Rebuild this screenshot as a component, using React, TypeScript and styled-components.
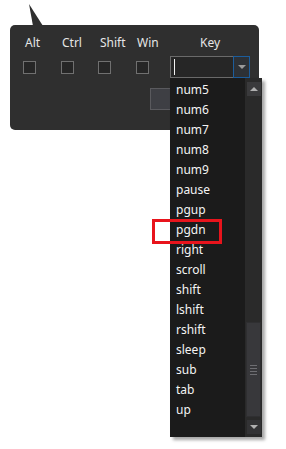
import React from "react";
import styled, { createGlobalStyle } from "styled-components";

const Global = createGlobalStyle`
  html, body { margin: 0; padding: 0; background: #ffffff; }
  body { font-family: "Noto Sans", "Open Sans", sans-serif; }
`;

const Page = styled.div`
  position: relative;
  width: 286px;
  height: 449px;
  padding: 25px 0 0 10px;
  box-sizing: border-box;
`;

const Tail = styled.svg`
  position: absolute;
  left: 26px;
  top: 4px;
`;

const Panel = styled.div`
  width: 249px;
  height: 105px;
  background: #2f2f2f;
  border-radius: 5px;
  padding: 10px 0 0 13px;
  box-sizing: border-box;
  display: flex;
  flex-direction: column;
`;

const Grid = styled.div`
  display: grid;
  grid-template-columns: 38px 37px 38px 34px 80px;
  grid-template-rows: 21px 22px;
`;

const Label = styled.div<{ $offset?: number; $center?: boolean }>`
  color: #e6e6e6;
  font-size: 12px;
  line-height: 16px;
  padding-left: ${(p) => p.$offset ?? 0}px;
  text-align: ${(p) => (p.$center ? "center" : "left")};
`;

const Cell = styled.div`
  display: flex;
  align-items: center;
`;

const Check = styled.div`
  width: 13px;
  height: 13px;
  box-sizing: border-box;
  border: 1px solid #707070;
  background: #262626;
`;

const Combo = styled.div`
  width: 80px;
  height: 22px;
  box-sizing: border-box;
  border: 1px solid #6a6a6a;
  background: #262626;
  display: flex;
`;

const ComboText = styled.div`
  flex: 1;
  display: flex;
  align-items: center;
  padding-left: 3px;
`;

const Caret = styled.div`
  width: 1px;
  height: 16px;
  background: #f2f2f2;
`;

const ComboButton = styled.div`
  width: 17px;
  height: 22px;
  margin: -1px -1px -1px 0;
  box-sizing: border-box;
  border: 1px solid #1c5d9c;
  background: #2d3136;
  display: flex;
  align-items: center;
  justify-content: center;
`;

const DownTri = styled.div<{ $color?: string }>`
  width: 0;
  height: 0;
  border-left: 4px solid transparent;
  border-right: 4px solid transparent;
  border-top: 4px solid ${(p) => p.$color ?? "#9a9a9a"};
`;

const UpTri = styled.div`
  width: 0;
  height: 0;
  border-left: 4px solid transparent;
  border-right: 4px solid transparent;
  border-bottom: 4px solid #b0b0b0;
`;

const OkButton = styled.div`
  margin: 10px 0 0 127px;
  width: 70px;
  height: 22px;
  box-sizing: border-box;
  border: 1px solid #5a5a5e;
  background: #3e3f44;
`;

const Dropdown = styled.div`
  position: absolute;
  left: 170px;
  top: 78px;
  width: 92px;
  height: 359px;
  display: flex;
  box-shadow: 3px 3px 3px rgba(0, 0, 0, 0.35);
`;

const List = styled.div`
  flex: 1;
  background: #1b1b1b;
  padding-top: 2px;
  display: flex;
  flex-direction: column;
`;

const Item = styled.div`
  height: 20px;
  line-height: 20px;
  padding-left: 6px;
  color: #f4f4f4;
  font-size: 12px;
`;

const ScrollBar = styled.div`
  width: 17px;
  background: #2a2a2a;
  display: flex;
  flex-direction: column;
  align-items: center;
  padding: 4px 0 3px;
  box-sizing: border-box;
`;

const ScrollBtn = styled.div<{ $bg: string }>`
  width: 14px;
  height: 14px;
  background: ${(p) => p.$bg};
  display: flex;
  align-items: center;
  justify-content: center;
`;

const Track = styled.div`
  flex: 1;
  width: 100%;
  display: flex;
  flex-direction: column;
  justify-content: flex-end;
  align-items: center;
  padding-bottom: 3px;
  box-sizing: border-box;
`;

const Thumb = styled.div`
  width: 15px;
  height: 95px;
  background: #38383b;
  border: 1px solid #2f2f31;
  box-sizing: border-box;
  display: flex;
  flex-direction: column;
  align-items: center;
  justify-content: center;
  gap: 2px;
`;

const Grip = styled.div`
  width: 7px;
  height: 1px;
  background: #6e6e72;
`;

const Highlight = styled.div`
  position: absolute;
  left: 152px;
  top: 219px;
  width: 70px;
  height: 25px;
  box-sizing: border-box;
  border: 3px solid #e8141c;
`;

const items = [
  "num5", "num6", "num7", "num8", "num9", "pause", "pgup", "pgdn", "right",
  "scroll", "shift", "lshift", "rshift", "sleep", "sub", "tab", "up",
];

export default function App() {
  return (
    <>
      <Global />
      <Page>
        <Tail width="20" height="24" viewBox="0 0 20 24">
          <polygon points="3,0 7,22 17,22" fill="#2f2f2f" />
          <polygon points="2,22 18,22 18,24 2,24" fill="#2f2f2f" />
        </Tail>
        <Panel>
          <Grid>
            <Label $offset={2}>Alt</Label>
            <Label $offset={1}>Ctrl</Label>
            <Label $offset={2}>Shift</Label>
            <Label $offset={1}>Win</Label>
            <Label $center>Key</Label>
            <Cell><Check /></Cell>
            <Cell><Check /></Cell>
            <Cell><Check /></Cell>
            <Cell><Check /></Cell>
            <Cell>
              <Combo>
                <ComboText><Caret /></ComboText>
                <ComboButton><DownTri /></ComboButton>
              </Combo>
            </Cell>
          </Grid>
          <OkButton />
        </Panel>
        <Dropdown>
          <List>
            {items.map((it) => (
              <Item key={it}>{it}</Item>
            ))}
          </List>
          <ScrollBar>
            <ScrollBtn $bg="#3a3a3c"><UpTri /></ScrollBtn>
            <Track>
              <Thumb>
                <Grip />
                <Grip />
                <Grip />
                <Grip />
              </Thumb>
            </Track>
            <ScrollBtn $bg="#333335"><DownTri $color="#b0b0b0" /></ScrollBtn>
          </ScrollBar>
        </Dropdown>
        <Highlight />
      </Page>
    </>
  );
}
